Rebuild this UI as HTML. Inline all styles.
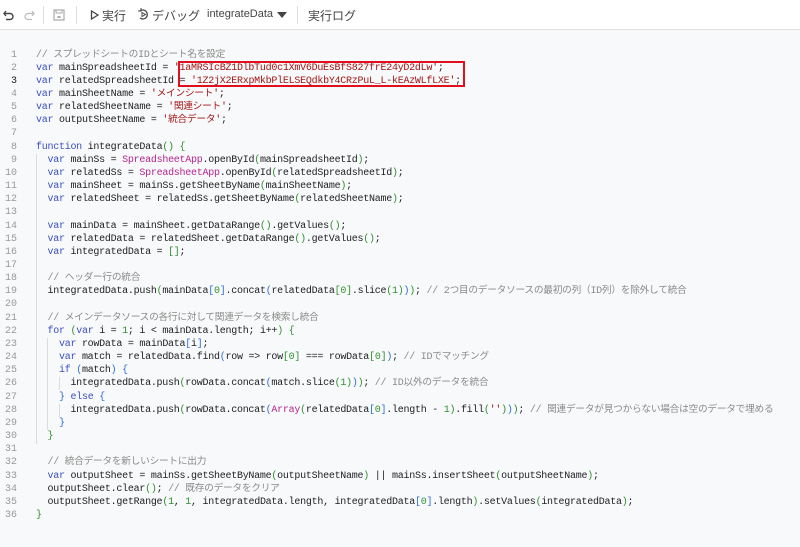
<!DOCTYPE html>
<html><head><meta charset="utf-8"><style>
*{margin:0;padding:0;box-sizing:border-box}
body{width:800px;height:547px;overflow:hidden;background:#f8f9fa;font-family:"Liberation Sans","Noto Sans CJK JP",sans-serif;position:relative}
.tb{position:absolute;left:0;top:0;width:800px;height:30px;background:#fff;border-bottom:1px solid #e3e3e3;color:#444;font-size:12px}
.tb span{position:absolute;top:7px;white-space:nowrap}
.sep{position:absolute;top:6px;width:1px;height:18px;background:#e0e0e0}
.code{position:absolute;left:0;top:48.5px;font-family:"Liberation Mono",monospace;font-size:10px;letter-spacing:-0.26px;color:#202124}
.l{height:13.17px;line-height:13.17px;white-space:pre;position:relative;overflow:visible}
.l span:not(.n){line-height:0}
.n{display:inline-block;width:17px;text-align:right;color:#999;margin-right:19px;letter-spacing:0}
.k{color:#3a4fc4}.s{color:#a31515}.c{color:#8a8a8a}.m{color:#b5258f}.g{color:#2f8f2f}.b{color:#2c6fd6}.num{color:#2f8f2f}
.j{font-size:9.7px;font-family:"Noto Sans CJK JP",sans-serif}
.guide{position:absolute;width:1px;background:#dcdcdc}
.box{position:absolute;left:178px;top:60.5px;width:287px;height:26px;border:2px solid #e0101e}
</style></head><body>
<div class="tb">
<svg style="position:absolute;left:3px;top:9px" width="12" height="12" viewBox="0 0 12 12"><path d="M3 2L1 4.5 3 7M1.5 4.5H7a3 3 0 0 1 0 6H3" fill="none" stroke="#444" stroke-width="1.4"/></svg>
<svg style="position:absolute;left:23px;top:9px" width="12" height="12" viewBox="0 0 12 12"><path d="M9 2l2 2.5L9 7M10.5 4.5H5a3 3 0 0 0 0 6h4" fill="none" stroke="#bbb" stroke-width="1.2"/></svg>
<div class="sep" style="left:43px"></div>
<svg style="position:absolute;left:53px;top:9px" width="12" height="12" viewBox="0 0 12 12"><rect x="1" y="1" width="10" height="10" fill="none" stroke="#aaa" stroke-width="1.2"/><rect x="3" y="1" width="6" height="3" fill="none" stroke="#aaa"/><rect x="4.5" y="7" width="3" height="2" fill="#aaa"/></svg>
<div class="sep" style="left:76px"></div>
<svg style="position:absolute;left:90px;top:10px" width="9" height="10" viewBox="0 0 9 10"><path d="M1.5 1L8 5 1.5 9Z" fill="none" stroke="#444" stroke-width="1.3"/></svg>
<span style="left:102px">実行</span>
<svg style="position:absolute;left:137px;top:8px" width="13" height="13" viewBox="0 0 13 13"><path d="M3 3A4.5 4.5 0 1 1 3 10" fill="none" stroke="#444" stroke-width="1.3"/><path d="M5 4.5L8.5 6.5 5 8.5Z" fill="none" stroke="#444"/><path d="M1 3h3V0" fill="none" stroke="#444"/></svg>
<span style="left:152px">デバッグ</span>
<span style="left:207px;font-size:11px;top:8px">integrateData</span>
<svg style="position:absolute;left:277px;top:12px" width="10" height="6"><path d="M0 0h10L5 6Z" fill="#444"/></svg>
<div class="sep" style="left:297px"></div>
<span style="left:308px">実行ログ</span>
</div>
<div class="guide" style="left:36px;top:154px;height:290px"></div>
<div class="guide" style="left:47px;top:338px;height:92px"></div>
<div class="guide" style="left:59px;top:377px;height:13px"></div>
<div class="guide" style="left:59px;top:404px;height:13px"></div>
<div class="code">
<div class="l"><span class="n">1</span><span class="c">// <span class="j">スプレッドシートの</span>ID<span class="j">とシート名を設定</span></span></div>
<div class="l"><span class="n">2</span><span class="k">var</span> mainSpreadsheetId = <span class="s">'1aMRSIcBZ1DlbTud0c1XmV6DuEsBfS827frE24yD2dLw'</span>;</div>
<div class="l"><span class="n" style="color:#222">3</span><span class="k">var</span> relatedSpreadsheetId = <span class="s">'1Z2jX2ERxpMkbPlELSEQdkbY4CRzPuL_L-kEAzWLfLXE'</span>;</div>
<div class="l"><span class="n">4</span><span class="k">var</span> mainSheetName = <span class="s">'<span class="j">メインシート</span>'</span>;</div>
<div class="l"><span class="n">5</span><span class="k">var</span> relatedSheetName = <span class="s">'<span class="j">関連シート</span>'</span>;</div>
<div class="l"><span class="n">6</span><span class="k">var</span> outputSheetName = <span class="s">'<span class="j">統合データ</span>'</span>;</div>
<div class="l"><span class="n">7</span></div>
<div class="l"><span class="n">8</span><span class="k">function</span> integrateData<span class="g">()</span> <span class="g">{</span></div>
<div class="l"><span class="n">9</span>  <span class="k">var</span> mainSs = <span class="m">SpreadsheetApp</span>.openById<span class="g">(</span>mainSpreadsheetId<span class="g">)</span>;</div>
<div class="l"><span class="n">10</span>  <span class="k">var</span> relatedSs = <span class="m">SpreadsheetApp</span>.openById<span class="g">(</span>relatedSpreadsheetId<span class="g">)</span>;</div>
<div class="l"><span class="n">11</span>  <span class="k">var</span> mainSheet = mainSs.getSheetByName<span class="g">(</span>mainSheetName<span class="g">)</span>;</div>
<div class="l"><span class="n">12</span>  <span class="k">var</span> relatedSheet = relatedSs.getSheetByName<span class="g">(</span>relatedSheetName<span class="g">)</span>;</div>
<div class="l"><span class="n">13</span></div>
<div class="l"><span class="n">14</span>  <span class="k">var</span> mainData = mainSheet.getDataRange<span class="g">()</span>.getValues<span class="g">()</span>;</div>
<div class="l"><span class="n">15</span>  <span class="k">var</span> relatedData = relatedSheet.getDataRange<span class="g">()</span>.getValues<span class="g">()</span>;</div>
<div class="l"><span class="n">16</span>  <span class="k">var</span> integratedData = <span class="g">[]</span>;</div>
<div class="l"><span class="n">17</span></div>
<div class="l"><span class="n">18</span>  <span class="c">// <span class="j">ヘッダー行の統合</span></span></div>
<div class="l"><span class="n">19</span>  integratedData.push<span class="g">(</span>mainData<span class="b">[</span><span class="num">0</span><span class="b">]</span>.concat<span class="b">(</span>relatedData<span class="g">[</span><span class="num">0</span><span class="g">]</span>.slice<span class="g">(</span><span class="num">1</span><span class="g">)</span><span class="b">)</span><span class="g">)</span>; <span class="c">// 2<span class="j">つ目のデータソースの最初の列（</span>ID<span class="j">列）を除外して統合</span></span></div>
<div class="l"><span class="n">20</span></div>
<div class="l"><span class="n">21</span>  <span class="c">// <span class="j">メインデータソースの各行に対して関連データを検索し統合</span></span></div>
<div class="l"><span class="n">22</span>  <span class="k">for</span> <span class="g">(</span><span class="k">var</span> i = <span class="num">1</span>; i &lt; mainData.length; i++<span class="g">)</span> <span class="g">{</span></div>
<div class="l"><span class="n">23</span>    <span class="k">var</span> rowData = mainData<span class="b">[</span>i<span class="b">]</span>;</div>
<div class="l"><span class="n">24</span>    <span class="k">var</span> match = relatedData.find<span class="b">(</span>row =&gt; row<span class="g">[</span><span class="num">0</span><span class="g">]</span> === rowData<span class="g">[</span><span class="num">0</span><span class="g">]</span><span class="b">)</span>; <span class="c">// ID<span class="j">でマッチング</span></span></div>
<div class="l"><span class="n">25</span>    <span class="k">if</span> <span class="b">(</span>match<span class="b">)</span> <span class="b">{</span></div>
<div class="l"><span class="n">26</span>      integratedData.push<span class="g">(</span>rowData.concat<span class="b">(</span>match.slice<span class="g">(</span><span class="num">1</span><span class="g">)</span><span class="b">)</span><span class="g">)</span>; <span class="c">// ID<span class="j">以外のデータを統合</span></span></div>
<div class="l"><span class="n">27</span>    <span class="b">}</span> <span class="k">else</span> <span class="b">{</span></div>
<div class="l"><span class="n">28</span>      integratedData.push<span class="g">(</span>rowData.concat<span class="b">(</span><span class="m">Array</span><span class="g">(</span>relatedData<span class="b">[</span><span class="num">0</span><span class="b">]</span>.length - <span class="num">1</span><span class="g">)</span>.fill<span class="g">(</span><span class="s">''</span><span class="g">)</span><span class="b">)</span><span class="g">)</span>; <span class="c">// <span class="j">関連データが見つからない場合は空のデータで埋める</span></span></div>
<div class="l"><span class="n">29</span>    <span class="b">}</span></div>
<div class="l"><span class="n">30</span>  <span class="g">}</span></div>
<div class="l"><span class="n">31</span></div>
<div class="l"><span class="n">32</span>  <span class="c">// <span class="j">統合データを新しいシートに出力</span></span></div>
<div class="l"><span class="n">33</span>  <span class="k">var</span> outputSheet = mainSs.getSheetByName<span class="g">(</span>outputSheetName<span class="g">)</span> || mainSs.insertSheet<span class="g">(</span>outputSheetName<span class="g">)</span>;</div>
<div class="l"><span class="n">34</span>  outputSheet.clear<span class="g">()</span>; <span class="c">// <span class="j">既存のデータをクリア</span></span></div>
<div class="l"><span class="n">35</span>  outputSheet.getRange<span class="g">(</span><span class="num">1</span>, <span class="num">1</span>, integratedData.length, integratedData<span class="b">[</span><span class="num">0</span><span class="b">]</span>.length<span class="g">)</span>.setValues<span class="g">(</span>integratedData<span class="g">)</span>;</div>
<div class="l"><span class="n">36</span><span class="g">}</span></div>
</div>
<div class="box"></div>
</body></html>
